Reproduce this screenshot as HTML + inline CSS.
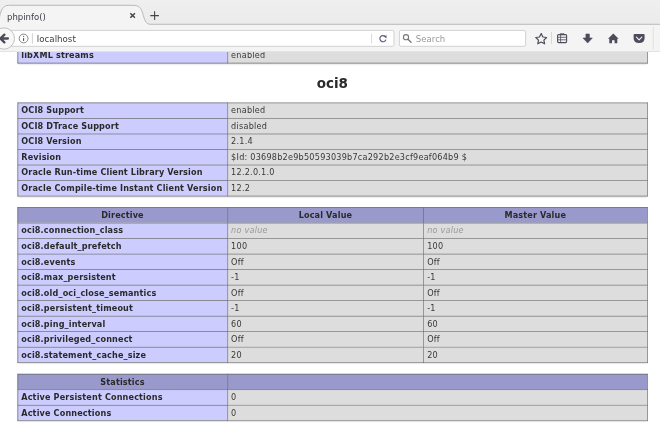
<!DOCTYPE html>
<html><head><meta charset="utf-8"><title>phpinfo()</title>
<style>
html,body{margin:0;padding:0;}
body{width:660px;height:431px;overflow:hidden;background:#fff;position:relative;font-family:"DejaVu Sans","Liberation Sans",sans-serif;}
#chrome{position:absolute;left:0;top:0;width:660px;height:52.1px;overflow:hidden;background:#f4f4f4;z-index:5;filter:blur(0.3px);}
#pagewrap{position:absolute;left:0;top:0;width:660px;height:431px;overflow:hidden;filter:blur(0.25px);}
#tabstrip{position:absolute;left:0;top:0;width:660px;height:24.3px;background:#ebebeb;}
#navbar{position:absolute;left:0;top:24.3px;width:660px;height:27.5px;background:#f3f3f3;border-top:0;}
#chrome svg{position:absolute;left:0;top:0;}
.ct{position:absolute;white-space:nowrap;color:#3a3a44;}
#page{position:absolute;left:0;top:0;width:985px;height:640px;transform:scale(0.6748);transform-origin:0 0;color:#222;}
#page table{position:absolute;left:25.5px;border-collapse:collapse;border:0;width:934px;box-shadow:1px 2px 3px #ccc;text-align:left;}
#page td,#page th{border:1px solid #666;font-size:12px;vertical-align:baseline;padding:4px 5px;line-height:14px;}
#page th{text-align:center;}
#page h2{position:absolute;margin:0;left:25.5px;width:934px;text-align:center;font-size:20px;font-weight:bold;line-height:24px;}
.e{background-color:#ccf;width:300px;font-weight:bold;letter-spacing:0.22px;}
.h{background-color:#99c;font-weight:bold;letter-spacing:0.22px;}
.v{letter-spacing:0.35px;background-color:#ddd;max-width:300px;overflow-x:auto;word-wrap:break-word;}
.v i{color:#999;}
#t3 td{padding:4.6px 5px 3.4px;}
#page .v{color:#383838;}
#page .e,#page .h,#page h2{color:#2a2a2a;}
</style></head>
<body>
<div id="pagewrap"><div id="page">
<table style="top:70px"><tr><td class="e">libXML streams </td><td class="v">enabled </td></tr></table>
<h2 style="top:110.6px">oci8</h2>
<table style="top:151.7px">
<tr><td class="e">OCI8 Support </td><td class="v">enabled </td></tr>
<tr><td class="e">OCI8 DTrace Support </td><td class="v">disabled </td></tr>
<tr><td class="e">OCI8 Version </td><td class="v">2.1.4 </td></tr>
<tr><td class="e">Revision </td><td class="v">$Id: 03698b2e9b50593039b7ca292b2e3cf9eaf064b9 $ </td></tr>
<tr><td class="e">Oracle Run-time Client Library Version </td><td class="v">12.2.0.1.0 </td></tr>
<tr><td class="e">Oracle Compile-time Instant Client Version </td><td class="v">12.2 </td></tr>
</table>
<table style="top:306.7px" id="t2">
<tr class="h"><th>Directive</th><th style="width:279.5px">Local Value</th><th>Master Value</th></tr>
<tr><td class="e">oci8.connection_class</td><td class="v"><i>no value</i></td><td class="v"><i>no value</i></td></tr>
<tr><td class="e">oci8.default_prefetch</td><td class="v">100</td><td class="v">100</td></tr>
<tr><td class="e">oci8.events</td><td class="v">Off</td><td class="v">Off</td></tr>
<tr><td class="e">oci8.max_persistent</td><td class="v">-1</td><td class="v">-1</td></tr>
<tr><td class="e">oci8.old_oci_close_semantics</td><td class="v">Off</td><td class="v">Off</td></tr>
<tr><td class="e">oci8.persistent_timeout</td><td class="v">-1</td><td class="v">-1</td></tr>
<tr><td class="e">oci8.ping_interval</td><td class="v">60</td><td class="v">60</td></tr>
<tr><td class="e">oci8.privileged_connect</td><td class="v">Off</td><td class="v">Off</td></tr>
<tr><td class="e">oci8.statement_cache_size</td><td class="v">20</td><td class="v">20</td></tr>
</table>
<table style="top:553.7px" id="t3">
<tr class="h"><th style="width:300px">Statistics </th><th>&nbsp;</th></tr>
<tr><td class="e">Active Persistent Connections </td><td class="v">0 </td></tr>
<tr><td class="e">Active Connections </td><td class="v">0 </td></tr>
</table>
</div></div>
<div id="chrome">
<svg width="660" height="53" viewBox="0 0 660 53">
<defs>
<linearGradient id="ts" x1="0" y1="0" x2="0" y2="1"><stop offset="0" stop-color="#efefef"/><stop offset="1" stop-color="#ebebeb"/></linearGradient>
</defs>
<rect x="0" y="0" width="660" height="53" fill="#f4f4f4"/>
<rect x="0" y="0" width="660" height="24.3" fill="url(#ts)"/>
<!-- selected tab -->
<path d="M-6 24.3 C-1 24.3 -1 17 1 11.5 C3 6.5 5.5 5.3 10 5.3 L133 5.3 C139 5.3 141 8 142.6 13 C144.5 19.5 145.5 24.3 150.5 24.3 L660 24.3 L660 30 L-6 30 Z" fill="#f4f4f4"/>
<path d="M-6 24.3 C-1 24.3 -1 17 1 11.5 C3 6.5 5.5 5.3 10 5.3 L133 5.3 C139 5.3 141 8 142.6 13 C144.5 19.5 145.5 24.3 150.5 24.3 L660 24.3" fill="none" stroke="#ababab" stroke-width="0.8"/>
<text x="7" y="19.6" font-family="'DejaVu Sans','Liberation Sans',sans-serif" font-size="8.6" fill="#3c3c48" textLength="38.8" lengthAdjust="spacingAndGlyphs">phpinfo()</text>
<!-- close x -->
<path d="M130.3 13.2 L134.9 17.8 M134.9 13.2 L130.3 17.8" stroke="#45454f" stroke-width="1.5" fill="none"/>
<!-- plus -->
<path d="M150.3 15.6 L158.9 15.6 M154.6 11.3 L154.6 19.9" stroke="#45454f" stroke-width="1.1" fill="none"/>
<!-- url bar -->
<rect x="9" y="30.4" width="385" height="15.9" rx="1.5" fill="#fff" stroke="#c6c6c6" stroke-width="0.8"/>
<circle cx="3.8" cy="38.5" r="10.7" fill="#f8f8f8" stroke="#b4b4b4" stroke-width="0.8"/>
<!-- back arrow -->
<path d="M7.9 38.5 L1 38.5 M4.4 34.6 L0.5 38.5 L4.4 42.4" stroke="#4c4c5a" stroke-width="2.3" fill="none" stroke-linecap="round" stroke-linejoin="round"/>
<!-- info -->
<circle cx="23.6" cy="38.5" r="4.4" fill="none" stroke="#6a6a6a" stroke-width="0.8"/>
<path d="M23.6 37.9 L23.6 40.9" stroke="#55555f" stroke-width="1.1"/>
<circle cx="23.6" cy="36.3" r="0.65" fill="#55555f"/>
<path d="M32.4 33.3 L32.4 43.6" stroke="#c4c4c4" stroke-width="0.8"/>
<text x="36.8" y="41.6" font-family="'DejaVu Sans','Liberation Sans',sans-serif" font-size="8.6" fill="#3c3c48" textLength="39" lengthAdjust="spacingAndGlyphs">localhost</text>
<path d="M371.6 33.6 L371.6 43.4" stroke="#cfcfcf" stroke-width="0.8"/>
<!-- reload -->
<path d="M385.3 36.6 A3.1 3.1 0 1 0 385.9 39.6" fill="none" stroke="#606080" stroke-width="1.2"/>
<path d="M383.5 36.2 L386.6 35.2 L386.4 38.6 Z" fill="#606080"/>
<!-- search box -->
<rect x="399.4" y="30.4" width="126.2" height="15.9" rx="1.5" fill="#fff" stroke="#c6c6c6" stroke-width="0.8"/>
<circle cx="406" cy="37.2" r="2.6" fill="none" stroke="#777" stroke-width="1.1"/>
<path d="M408 39.2 L411 42.2" stroke="#777" stroke-width="1.4" stroke-linecap="round"/>
<text x="415.8" y="41.6" font-family="'DejaVu Sans','Liberation Sans',sans-serif" font-size="8.6" fill="#9a9a9a" textLength="29.5" lengthAdjust="spacingAndGlyphs">Search</text>
<!-- star -->
<path d="M541.2 33.6 L542.9 37 L546.6 37.5 L543.9 40.1 L544.6 43.8 L541.2 42 L537.8 43.8 L538.5 40.1 L535.8 37.5 L539.5 37 Z" fill="none" stroke="#4c4c5a" stroke-width="1.2" stroke-linejoin="round"/>
<path d="M551.5 32 L551.5 44" stroke="#d0d0d0" stroke-width="0.8"/>
<!-- bookmarks list -->
<rect x="557.6" y="34.6" width="9" height="8" rx="1" fill="none" stroke="#4c4c5a" stroke-width="1.1"/>
<rect x="560" y="33.4" width="4.2" height="1.6" fill="#4c4c5a"/>
<path d="M558 37.3 L566.4 37.3 M558 39.8 L566.4 39.8 M560.6 35 L560.6 42.4" stroke="#4c4c5a" stroke-width="0.8"/>
<!-- download -->
<path d="M585.9 34 L589.4 34 L589.4 38 L592.3 38 L587.65 43 L583 38 L585.9 38 Z" fill="#4c4c5a" stroke="#4c4c5a" stroke-width="0.6" stroke-linejoin="round"/>
<!-- home -->
<path d="M613.3 33.6 L618.6 38.8 L617.3 38.8 L617.3 43.2 L614.6 43.2 L614.6 40.2 L612 40.2 L612 43.2 L609.3 43.2 L609.3 38.8 L608 38.8 Z" fill="#4c4c5a"/>
<!-- pocket -->
<path d="M634.6 34 L643.6 34 Q644.6 34 644.6 35 L644.6 38 Q644.6 43 639.1 43 Q633.6 43 633.6 38 L633.6 35 Q633.6 34 634.6 34 Z" fill="#4c4c5a"/>
<path d="M636.4 37.2 L639.1 39.8 L641.8 37.2" fill="none" stroke="#f4f4f4" stroke-width="1.1" stroke-linecap="round" stroke-linejoin="round"/>
<path d="M653.3 27 L653.3 49.5" stroke="#dcdcdc" stroke-width="0.8"/>
<path d="M0 51.8 L660 51.8" stroke="#d2d2d2" stroke-width="0.7"/>
</svg>
</div>
</body></html>
